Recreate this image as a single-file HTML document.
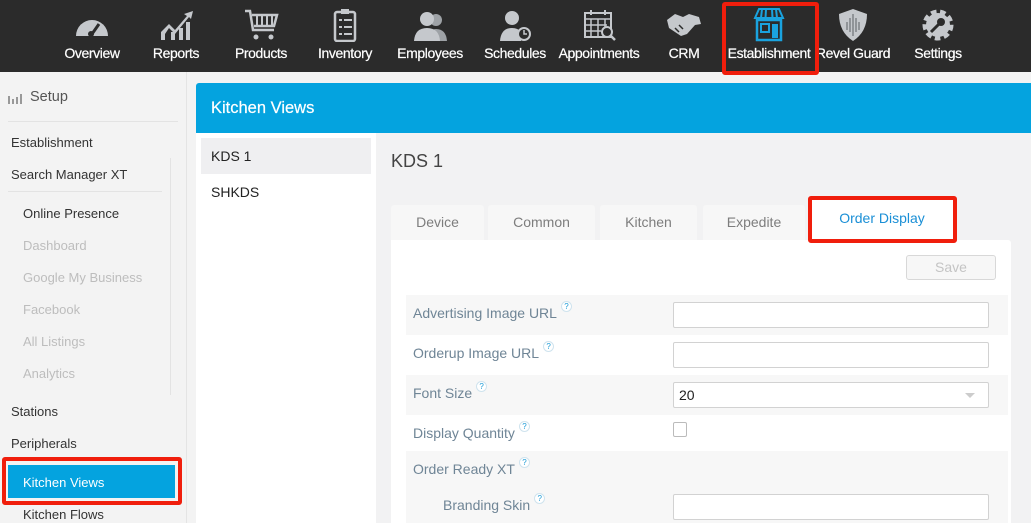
<!DOCTYPE html>
<html><head><meta charset="utf-8"><style>
*{margin:0;padding:0;box-sizing:border-box}
body{width:1031px;height:523px;overflow:hidden;background:#f3f3f3;font-family:"Liberation Sans",Helvetica,Arial,sans-serif;position:relative}
.a{position:absolute}
#top{left:0;top:0;width:1031px;height:72px;background:#2b2b2b}
.nav{position:absolute;top:0;width:100px;margin-left:-50px;text-align:center;color:#fff;font-size:14px;letter-spacing:-0.4px;-webkit-text-stroke:0.2px #fff}
.nav svg{display:block;margin:8px auto 0;width:38px;height:34px}
.nav span{display:block;margin-top:3px}
.sb{position:absolute;font-size:13px;color:#333}
.sub{left:23px;color:#333}
.dim{color:#bdbdbd}
.lbl{position:absolute;left:413px;font-size:14px;color:#6f8596}
.q{display:inline-block;width:11px;height:11px;border:1px solid #cfe3ee;border-radius:50%;font-size:8px;color:#1a9ad6;text-align:center;line-height:9px;vertical-align:top;margin-left:4px;margin-top:-4px;background:#fff}
.inp{position:absolute;left:673px;width:316px;height:26px;border:1px solid #d2d2d2;border-radius:2px;background:#fff}
.tab{position:absolute;top:205px;height:35px;background:#f7f7f7;border-radius:3px 3px 0 0;font-size:14px;color:#7d7d7d;text-align:center;line-height:34px}
</style></head><body>
<div id="top" class="a"></div>
<div class="nav" style="left:92px"><svg viewBox="0 0 38 34"><path d="M3 28 A16 16 0 0 1 35 28 Z" fill="#c5c8cc"/><path d="M19 26 L26 16" stroke="#2b2b2b" stroke-width="3"/><circle cx="18" cy="26" r="3" fill="#2b2b2b"/></svg><span>Overview</span></div>
<div class="nav" style="left:176px"><svg viewBox="0 0 38 34"><path d="M4 32 L4 24 L12 16 L18 22 L30 8 L27 6 L36 3 L34 11 L32 9 L18 26 L12 20 L8 26 L8 32Z" fill="#c5c8cc"/><rect x="14" y="24" width="4" height="8" fill="#c5c8cc"/><rect x="22" y="20" width="4" height="12" fill="#c5c8cc"/><rect x="29" y="14" width="4" height="18" fill="#c5c8cc"/></svg><span>Reports</span></div>
<div class="nav" style="left:261px"><svg viewBox="0 0 38 34"><path d="M3 3 H8 L11 22 H32 M10 7 H35 L32 18 H12" stroke="#c5c8cc" stroke-width="2.5" fill="none"/><path d="M15 8v9M20 8v9M25 8v9M30 8v9" stroke="#c5c8cc" stroke-width="2"/><circle cx="14" cy="29" r="2.5" fill="#c5c8cc"/><circle cx="29" cy="29" r="2.5" fill="#c5c8cc"/></svg><span>Products</span></div>
<div class="nav" style="left:345px"><svg viewBox="0 0 38 34"><rect x="9" y="4" width="20" height="29" rx="2" stroke="#c5c8cc" stroke-width="2.5" fill="none"/><rect x="15" y="1" width="8" height="5" fill="#c5c8cc"/><path d="M13 12h3M18 12h8M13 19h3M18 19h8M13 26h3M18 26h8" stroke="#c5c8cc" stroke-width="2"/></svg><span>Inventory</span></div>
<div class="nav" style="left:430px"><svg viewBox="0 0 38 34"><circle cx="25" cy="12" r="6" fill="#9ea2a6"/><path d="M14 33 Q16 21 25 21 Q35 21 36 33Z" fill="#9ea2a6"/><circle cx="16" cy="11" r="7" fill="#c5c8cc"/><path d="M3 33 Q4 20 16 20 Q28 20 29 33Z" fill="#c5c8cc"/></svg><span>Employees</span></div>
<div class="nav" style="left:515px"><svg viewBox="0 0 38 34"><circle cx="16" cy="10" r="7" fill="#c5c8cc"/><path d="M4 33 Q5 20 16 20 Q22 20 25 24 L25 33Z" fill="#c5c8cc"/><circle cx="28" cy="26" r="6" stroke="#c5c8cc" stroke-width="2" fill="#2b2b2b"/><path d="M28 22v4h3" stroke="#c5c8cc" stroke-width="1.5" fill="none"/></svg><span>Schedules</span></div>
<div class="nav" style="left:599px"><svg viewBox="0 0 38 34"><rect x="5" y="5" width="26" height="24" stroke="#c5c8cc" stroke-width="2" fill="none"/><path d="M5 11h26M5 17h22M5 23h16M11 11v18M18 11v18M25 11v8" stroke="#c5c8cc" stroke-width="1.5"/><path d="M11 2v5M25 2v5" stroke="#c5c8cc" stroke-width="2"/><circle cx="27" cy="24" r="5" stroke="#c5c8cc" stroke-width="2" fill="#2b2b2b"/><path d="M31 28l4 4" stroke="#c5c8cc" stroke-width="2.5"/></svg><span>Appointments</span></div>
<div class="nav" style="left:684px"><svg viewBox="0 0 38 34"><path d="M2 12 L10 6 L18 9 L24 6 L34 9 L36 16 L30 17 L22 26 L16 28 L10 24 L4 20Z" fill="#c5c8cc"/><path d="M10 20 L14 24 M14 17 L18 21" stroke="#2b2b2b" stroke-width="1.5"/></svg><span>CRM</span></div>
<div class="nav" style="left:769px"><svg viewBox="0 0 38 34"><path d="M5 10 L9 1 H29 L33 10 Z" fill="none" stroke="#1aa3df" stroke-width="2"/><path d="M12 1 L11 10 M16 1 L15.5 10 M22 1 L22.5 10 M26 1 L27 10" stroke="#1aa3df" stroke-width="2"/><rect x="7" y="12" width="24" height="20" fill="none" stroke="#1aa3df" stroke-width="2.5"/><rect x="11" y="16" width="8" height="8" fill="none" stroke="#1aa3df" stroke-width="2"/><rect x="22" y="16" width="6" height="14" fill="#1aa3df"/></svg><span>Establishment</span></div>
<div class="nav" style="left:853px"><svg viewBox="0 0 38 34"><path d="M19 1 L33 6 Q33 24 19 33 Q5 24 5 6Z" fill="#c5c8cc"/><path d="M13 14v8M16 10v14M19 6v22M22 10v14M25 14v8" stroke="#6e7276" stroke-width="1.2"/></svg><span>Revel Guard</span></div>
<div class="nav" style="left:938px"><svg viewBox="0 0 38 34"><circle cx="19" cy="17" r="12" fill="none" stroke="#c5c8cc" stroke-width="7" stroke-dasharray="5 3.3"/><circle cx="19" cy="17" r="12" fill="#c5c8cc"/><path d="M12 24 L20 16" stroke="#2b2b2b" stroke-width="3"/><circle cx="22" cy="14" r="4" fill="#2b2b2b"/></svg><span>Settings</span></div>
<div class="a" style="left:722px;top:2px;width:97px;height:73px;border:4px solid #f01e0c;border-radius:3px"></div>

<div class="a" style="left:186px;top:72px;width:1px;height:451px;background:#e4e4e4"></div>
<svg class="a" style="left:8px;top:93px" width="14" height="11"><rect x="0" y="3" width="2" height="8" fill="#999"/><rect x="4" y="6" width="2" height="5" fill="#999"/><rect x="8" y="4" width="2" height="7" fill="#999"/><rect x="12" y="1" width="2" height="10" fill="#999"/></svg>
<div class="sb" style="left:30px;top:89px;font-size:14.5px;color:#555">Setup</div>
<div class="a" style="left:8px;top:121px;width:170px;height:1px;background:#e3e3e3"></div>
<div class="sb" style="left:11px;top:135px">Establishment</div>
<div class="sb" style="left:11px;top:167px">Search Manager XT</div>
<div class="a" style="left:8px;top:191px;width:154px;height:1px;background:#e3e3e3"></div>
<div class="a" style="left:170px;top:158px;width:1px;height:237px;background:#e3e3e3"></div>
<div class="sb sub" style="top:206px">Online Presence</div>
<div class="sb sub dim" style="top:238px">Dashboard</div>
<div class="sb sub dim" style="top:270px">Google My Business</div>
<div class="sb sub dim" style="top:302px">Facebook</div>
<div class="sb sub dim" style="top:334px">All Listings</div>
<div class="sb sub dim" style="top:366px">Analytics</div>
<div class="sb" style="left:11px;top:404px">Stations</div>
<div class="sb" style="left:11px;top:436px">Peripherals</div>
<div class="a" style="left:2px;top:457px;width:180px;height:48px;border:4px solid #f01e0c;border-radius:3px"></div>
<div class="a" style="left:8px;top:465px;width:167px;height:33px;background:#04a3df"></div>
<div class="sb" style="left:23px;top:475px;color:#fff">Kitchen Views</div>
<div class="sb sub" style="top:507px">Kitchen Flows</div>

<div class="a" style="left:196px;top:83px;width:835px;height:50px;background:#04a3df;border-radius:3px 0 0 0"></div>
<div class="a" style="left:211px;top:99px;color:#fff;font-size:16.5px;-webkit-text-stroke:0.2px #fff">Kitchen Views</div>
<div class="a" style="left:196px;top:133px;width:180px;height:390px;background:#fff"></div>
<div class="a" style="left:201px;top:138px;width:170px;height:36px;background:#efeff1"></div>
<div class="a" style="left:211px;top:148px;font-size:14px;color:#222">KDS 1</div>
<div class="a" style="left:211px;top:184px;font-size:14px;color:#222">SHKDS</div>
<div class="a" style="left:376px;top:133px;width:655px;height:390px;background:#f2f2f3"></div>
<div class="a" style="left:391px;top:151px;font-size:18px;color:#444">KDS 1</div>
<div class="tab" style="left:391px;width:93px">Device</div>
<div class="tab" style="left:488px;width:107px">Common</div>
<div class="tab" style="left:600px;width:97px">Kitchen</div>
<div class="tab" style="left:703px;width:102px">Expedite</div>
<div class="a" style="left:391px;top:240px;width:620px;height:283px;background:#fff;border-radius:0 3px 0 0"></div>
<div class="a" style="left:808px;top:196px;width:149px;height:47px;border:4px solid #f01e0c;border-radius:3px;background:#fff"></div>
<div class="a" style="left:812px;top:210px;width:140px;text-align:center;font-size:14px;color:#1a8fd6">Order Display</div>
<div class="a" style="left:906px;top:255px;width:90px;height:25px;border:1px solid #d8d8d8;border-radius:3px;background:#f7f7f7;color:#c4c4c4;font-size:14px;text-align:center;line-height:23px">Save</div>
<div class="a" style="left:406px;top:295px;width:602px;height:40px;background:#f7f7f7"></div>
<div class="a" style="left:406px;top:375px;width:602px;height:40px;background:#f7f7f7"></div>
<div class="a" style="left:406px;top:451px;width:602px;height:72px;background:#f7f7f7"></div>
<div class="lbl" style="top:305px">Advertising Image URL<span class="q">?</span></div>
<div class="inp" style="top:302px"></div>
<div class="lbl" style="top:345px">Orderup Image URL<span class="q">?</span></div>
<div class="inp" style="top:342px"></div>
<div class="lbl" style="top:385px">Font Size<span class="q">?</span></div>
<div class="inp" style="top:382px"></div>
<div class="a" style="left:679px;top:387px;font-size:14px;color:#222">20</div>
<div class="a" style="left:965px;top:393px;width:0;height:0;border-left:5px solid transparent;border-right:5px solid transparent;border-top:5px solid #ccc"></div>
<div class="lbl" style="top:425px">Display Quantity<span class="q">?</span></div>
<div class="a" style="left:673px;top:422px;width:14px;height:15px;border:1px solid #bbb;border-radius:2px;background:#fff"></div>
<div class="lbl" style="top:461px">Order Ready XT<span class="q">?</span></div>
<div class="lbl" style="top:497px;left:443px">Branding Skin<span class="q">?</span></div>
<div class="inp" style="top:494px"></div>
</body></html>
